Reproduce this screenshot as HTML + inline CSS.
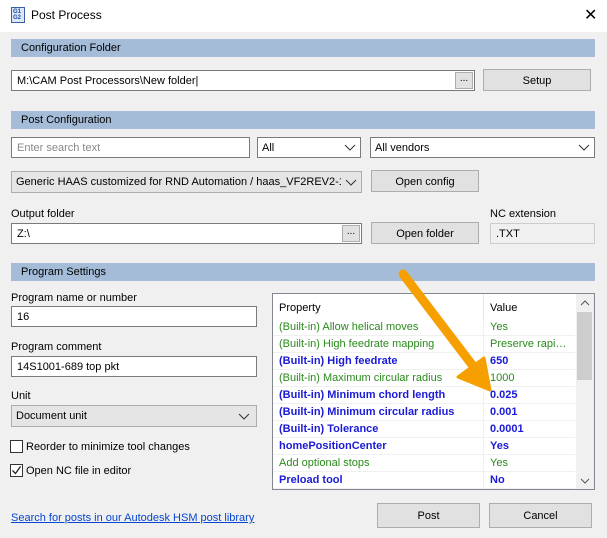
<!DOCTYPE html>
<html><head><style>
body{margin:0;width:607px;height:538px;overflow:hidden;background:#f0f0f0;font-family:"Liberation Sans",sans-serif;font-size:11px;color:#000;position:relative}
div,span{position:absolute;box-sizing:border-box}
.hd{left:11px;width:584px;height:18px;background:#a4bcd8;padding:3px 0 0 10px}
.in{background:#fff;border:1px solid #7a7a7a;padding:4px 0 0 5px;white-space:nowrap;overflow:hidden}
.cb{background:#e5e5e5;border:1px solid #adadad;padding:4px 0 0 4px;white-space:nowrap;overflow:hidden}
.btn{background:#e1e1e1;border:1px solid #adadad;text-align:center;padding-top:5px}
.lb{white-space:nowrap}
.r{left:0;width:302px;height:17px;border-bottom:1px solid #f0f0f0;white-space:nowrap}
.r span{position:absolute;top:2px}
.g{color:#2a8a1c}.b{color:#1a1ad8;font-weight:bold}
</style></head><body>
<div style="left:0;top:0;width:607px;height:32px;background:#fff"></div>
<div style="left:11px;top:7px;width:14px;height:16px;border:1px solid #3a5ea8;background:#dde8f6;font-size:6px;line-height:6px;color:#1d4aa8;padding:1px 0 0 1px;font-weight:bold">G1<br>G2</div>
<div class="lb" style="left:31px;top:8px;font-size:12px">Post Process</div>
<div class="lb" style="left:584px;top:5px;font-size:16px">✕</div>

<div class="hd" style="top:39px">Configuration Folder</div>
<div class="in" style="left:11px;top:70px;width:464px;height:21px">M:\CAM Post Processors\New folder|</div>
<div class="btn" style="left:455px;top:72px;width:18px;height:17px;padding-top:0;font-size:10px">...</div>
<div class="btn" style="left:483px;top:69px;width:108px;height:22px">Setup</div>

<div class="hd" style="top:111px">Post Configuration</div>
<div class="in" style="left:11px;top:137px;width:239px;height:21px;color:#888">Enter search text</div>
<div class="cb" style="left:257px;top:137px;width:104px;height:21px;background:#fff;border-color:#7a7a7a">All<svg viewBox="0 0 12 10" style="position:absolute;right:4px;top:5px;width:12px;height:10px"><path d="M1 2l5 5 5-5" fill="none" stroke="#333"/></svg></div>
<div class="cb" style="left:370px;top:137px;width:225px;height:21px;background:#fff;border-color:#7a7a7a">All vendors<svg viewBox="0 0 12 10" style="position:absolute;right:4px;top:5px;width:12px;height:10px"><path d="M1 2l5 5 5-5" fill="none" stroke="#333"/></svg></div>
<div class="cb" style="left:11px;top:171px;width:351px;height:22px">Generic HAAS customized for RND Automation / haas_VF2REV2-10-1<div style="right:0;top:0;width:20px;height:20px;background:#e5e5e5"><svg viewBox="0 0 12 10" style="position:absolute;right:4px;top:6px;width:12px;height:10px"><path d="M1 2l5 5 5-5" fill="none" stroke="#333"/></svg></div></div>
<div class="btn" style="left:371px;top:170px;width:108px;height:22px">Open config</div>
<div class="lb" style="left:11px;top:208px">Output folder</div>
<div class="lb" style="left:490px;top:208px">NC extension</div>
<div class="in" style="left:11px;top:223px;width:351px;height:21px">Z:\</div>
<div class="btn" style="left:342px;top:225px;width:18px;height:17px;padding-top:0;font-size:10px">...</div>
<div class="btn" style="left:371px;top:222px;width:108px;height:22px">Open folder</div>
<div class="in" style="left:490px;top:223px;width:105px;height:21px;background:#f0f0f0;border-color:#ccc">.TXT</div>

<div class="hd" style="top:263px">Program Settings</div>
<div class="lb" style="left:11px;top:292px">Program name or number</div>
<div class="in" style="left:11px;top:306px;width:246px;height:21px">16</div>
<div class="lb" style="left:11px;top:341px">Program comment</div>
<div class="in" style="left:11px;top:356px;width:246px;height:21px">14S1001-689 top pkt</div>
<div class="lb" style="left:11px;top:390px">Unit</div>
<div class="cb" style="left:11px;top:405px;width:246px;height:22px">Document unit<svg viewBox="0 0 12 10" style="position:absolute;right:6px;top:6px;width:12px;height:10px"><path d="M1 2l5 5 5-5" fill="none" stroke="#333"/></svg></div>
<div style="left:10px;top:440px;width:13px;height:13px;border:1px solid #333;background:#fff"></div>
<div class="lb" style="left:26px;top:441px">Reorder to minimize tool changes</div>
<div style="left:10px;top:464px;width:13px;height:13px;border:1px solid #333;background:#fff"><svg viewBox="0 0 11 11" style="position:absolute;left:0;top:0;width:11px;height:11px"><path d="M1.5 5.5l3 3 5-7" fill="none" stroke="#222" stroke-width="1.3"/></svg></div>
<div class="lb" style="left:26px;top:465px">Open NC file in editor</div>
<div class="lb" style="left:11px;top:512px;color:#0645d0;text-decoration:underline">Search for posts in our Autodesk HSM post library</div>

<div style="left:272px;top:293px;width:323px;height:197px;border:1px solid #828790;background:#fff;overflow:hidden">
 <div style="left:0;top:0;width:303px;height:26px;background:#fff"><span style="left:6px;top:8px">Property</span><span style="left:217px;top:8px">Value</span><div style="left:210px;top:0;width:1px;height:26px;background:#e5e5e5"></div></div>
 <div style="left:210px;top:26px;width:1px;height:170px;background:#f0f0f0"></div>
 <div class="r g" style="top:25px"><span style="left:6px">(Built-in) Allow helical moves</span><span style="left:217px">Yes</span></div>
 <div class="r g" style="top:42px"><span style="left:6px">(Built-in) High feedrate mapping</span><span style="left:217px">Preserve rapi…</span></div>
 <div class="r b" style="top:59px"><span style="left:6px">(Built-in) High feedrate</span><span style="left:217px">650</span></div>
 <div class="r g" style="top:76px"><span style="left:6px">(Built-in) Maximum circular radius</span><span style="left:217px">1000</span></div>
 <div class="r b" style="top:93px"><span style="left:6px">(Built-in) Minimum chord length</span><span style="left:217px">0.025</span></div>
 <div class="r b" style="top:110px"><span style="left:6px">(Built-in) Minimum circular radius</span><span style="left:217px">0.001</span></div>
 <div class="r b" style="top:127px"><span style="left:6px">(Built-in) Tolerance</span><span style="left:217px">0.0001</span></div>
 <div class="r b" style="top:144px"><span style="left:6px">homePositionCenter</span><span style="left:217px">Yes</span></div>
 <div class="r g" style="top:161px"><span style="left:6px">Add optional stops</span><span style="left:217px">Yes</span></div>
 <div class="r b" style="top:178px"><span style="left:6px">Preload tool</span><span style="left:217px">No</span></div>
 <div style="left:303px;top:0;width:18px;height:195px;background:#f0f0f0"></div>
 <div style="left:304px;top:18px;width:15px;height:68px;background:#cdcdcd"></div>
 <svg viewBox="0 0 10 8" style="position:absolute;left:307px;top:5px;width:10px;height:8px"><path d="M1 6l4-4 4 4" fill="none" stroke="#555"/></svg>
 <svg viewBox="0 0 10 8" style="position:absolute;left:307px;top:183px;width:10px;height:8px"><path d="M1 2l4 4 4-4" fill="none" stroke="#555"/></svg>
</div>

<svg style="position:absolute;left:0;top:0" width="607" height="538"><path d="M403 274 L473 366" stroke="#f5a000" stroke-width="9" stroke-linecap="round"/><path d="M490 390 L458 377 L484 358 Z" fill="#f5a000" stroke="#f5a000" stroke-width="3" stroke-linejoin="round"/></svg>

<div class="btn" style="left:377px;top:503px;width:103px;height:25px;padding-top:6px">Post</div>
<div class="btn" style="left:489px;top:503px;width:103px;height:25px;padding-top:6px">Cancel</div>
</body></html>
